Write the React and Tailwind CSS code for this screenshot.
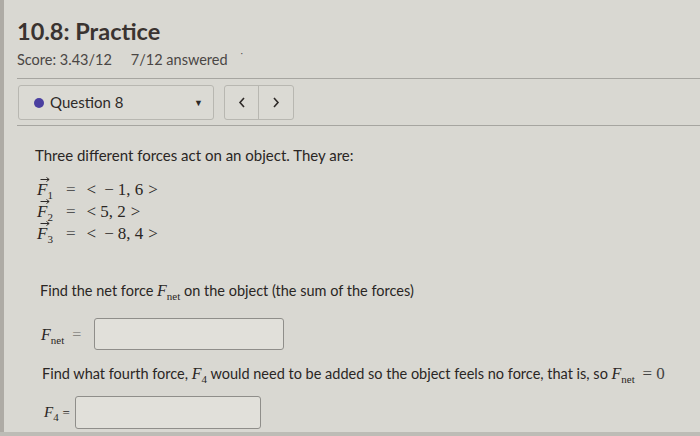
import React from "react";

const serif = { fontFamily: '"Liberation Serif", "DejaVu Serif", serif' };

function Sub({ children, bold }) {
  return (
    <span className={"relative top-[4px] text-[11px] not-italic " + (bold ? "font-bold" : "")} style={serif}>
      {children}
    </span>
  );
}

function FVec({ sub }) {
  return (
    <span className="relative inline-block w-[22px]" style={serif}>
      <svg className="absolute left-[3px] top-[0px]" width="10" height="5" viewBox="0 0 10 5">
        <path d="M0.5 2.5 H9 M6.5 0.5 L9.2 2.5 L6.5 4.5" stroke="#2e2a28" strokeWidth="1" fill="none" />
      </svg>
      <span className="italic">F</span>
      <Sub>{sub}</Sub>
    </span>
  );
}

function Fnet({ bold }) {
  return (
    <span className="whitespace-nowrap" style={serif}>
      <span className="italic">F</span>
      <Sub bold={bold}>net</Sub>
    </span>
  );
}

function VecRow({ sub, parts }) {
  return (
    <div className="flex items-center h-[22px]">
      <FVec sub={sub} />
      <span className="ml-[7px] text-[#555]">=</span>
      <span className="ml-[11px]">&lt;</span>
      {parts}
      <span className="ml-[5px]">&gt;</span>
    </div>
  );
}

export default function App() {
  return (
    <div
      className="w-[700px] h-[436px] overflow-hidden bg-[#d9d8d2] text-[#2a2624] flex border-b-4 border-[#bdbcb6]"
      style={{ fontFamily: 'Lato, "Open Sans", "Liberation Sans", sans-serif' }}
    >
      <div className="w-[4px] bg-[#aeaba5] shrink-0" />
      <div className="flex-1 flex flex-col pl-[13px]">
        <div className="pt-[16px] text-[23.5px] font-bold leading-[30px] text-[#3a3330]">10.8: Practice</div>
        <div className="mt-[4px] flex items-center text-[14.5px] leading-[20px] text-[#4a4644]">
          <span>Score: 3.43/12</span>
          <span className="ml-[19px]">7/12 answered</span>
          <span className="ml-[12px] text-[10px] leading-none mb-[8px]">˙</span>
        </div>
        <div className="mt-[8px] h-px bg-[#a6a5a0]" />
        <div className="mt-[6px] flex gap-[10px] pl-[1px]">
          <div className="w-[196px] h-[35px] border border-[#b8b7b1] rounded-[3px] flex items-center pl-[15px] pr-[10px] bg-[#dbdad4]">
            <span className="w-[10px] h-[10px] rounded-full bg-[#4a3fa0]" />
            <span className="ml-[6px] text-[15px] text-[#2e2a28]">Question 8</span>
            <span className="ml-auto text-[9px] text-[#2e2a28]">▼</span>
          </div>
          <div className="flex h-[35px] border border-[#b8b7b1] rounded-[3px] bg-[#dbdad4]">
            <div className="w-[34px] flex items-center justify-center border-r border-[#b8b7b1]">
              <svg width="8" height="11" viewBox="0 0 8 11"><path d="M6 1 L2 5.5 L6 10" stroke="#2e2a28" strokeWidth="1.6" fill="none" /></svg>
            </div>
            <div className="w-[34px] flex items-center justify-center">
              <svg width="8" height="11" viewBox="0 0 8 11"><path d="M2 1 L6 5.5 L2 10" stroke="#2e2a28" strokeWidth="1.6" fill="none" /></svg>
            </div>
          </div>
        </div>
        <div className="mt-[5px] h-px bg-[#a6a5a0]" />
        <div className="pl-[18px] pt-[19px] text-[15px] leading-[20px]">
          Three different forces act on an object. They are:
        </div>
        <div className="pl-[20px] pt-[14px] text-[17px]" style={serif}>
          <VecRow sub="1" parts={<><span className="ml-[8px]">−</span><span className="ml-[4px]">1, 6</span></>} />
          <VecRow sub="2" parts={<span className="ml-[4px]">5, 2</span>} />
          <VecRow sub="3" parts={<><span className="ml-[8px]">−</span><span className="ml-[4px]">8, 4</span></>} />
        </div>
        <div className="pl-[23px] pt-[35px] text-[14.5px] leading-[20px]">
          Find the net force <span className="text-[16px]"><Fnet /></span> on the object (the sum of the forces)
        </div>
        <div className="pl-[24px] pt-[16px] flex items-center">
          <span className="text-[16px] w-[53px]"><Fnet /> <span className="text-[#8a8985] ml-[4px]" style={serif}>=</span></span>
          <div className="w-[190px] h-[32px] border border-[#8f8e8a] rounded-[3px] bg-[#e1e0da]" />
        </div>
        <div className="pl-[25px] pt-[13px] text-[14.5px] leading-[20px]">
          Find what fourth force, <span className="text-[16px]" style={serif}><span className="italic">F</span><Sub>4</Sub></span> would need to be added so the object feels no force, that is, so <span className="text-[16px]"><Fnet /></span> <span className="text-[17px] text-[#444] ml-[4px]" style={serif}>= 0</span>
        </div>
        <div className="pl-[27px] pt-[11px] flex items-center">
          <span className="text-[15px] w-[31px]" style={serif}><span className="italic">F</span><Sub>4</Sub> <span className="text-[13px]">=</span></span>
          <div className="w-[186px] h-[33px] border border-[#8f8e8a] rounded-[3px] bg-[#e1e0da]" />
        </div>
      </div>
    </div>
  );
}
